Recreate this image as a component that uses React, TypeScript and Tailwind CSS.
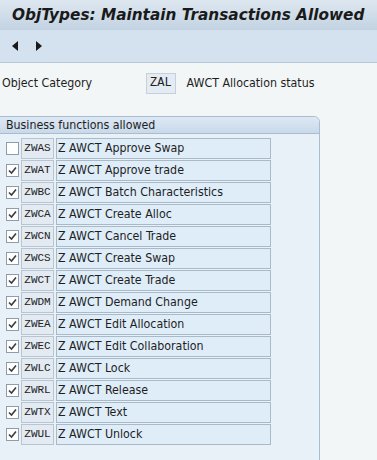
import React from 'react';

const rows: [boolean, string, string][] = [
  [false, 'ZWAS', 'Z AWCT Approve Swap'],
  [true, 'ZWAT', 'Z AWCT Approve trade'],
  [true, 'ZWBC', 'Z AWCT Batch Characteristics'],
  [true, 'ZWCA', 'Z AWCT Create Alloc'],
  [true, 'ZWCN', 'Z AWCT Cancel Trade'],
  [true, 'ZWCS', 'Z AWCT Create Swap'],
  [true, 'ZWCT', 'Z AWCT Create Trade'],
  [true, 'ZWDM', 'Z AWCT Demand Change'],
  [true, 'ZWEA', 'Z AWCT Edit Allocation'],
  [true, 'ZWEC', 'Z AWCT Edit Collaboration'],
  [true, 'ZWLC', 'Z AWCT Lock'],
  [true, 'ZWRL', 'Z AWCT Release'],
  [true, 'ZWTX', 'Z AWCT Text'],
  [true, 'ZWUL', 'Z AWCT Unlock'],
];

function Check({ on }: { on: boolean }) {
  return (
    <div className="w-[13px] h-[13px] border border-[#8e9cab] bg-white flex items-center justify-center shrink-0">
      {on && (
        <svg width="9" height="9" viewBox="0 0 9 9">
          <path d="M1 4.5 L3.5 7 L8 1.5" fill="none" stroke="#3c3c3c" strokeWidth="1.6" />
        </svg>
      )}
    </div>
  );
}

export default function App() {
  return (
    <div className="w-[377px] h-[460px] overflow-hidden bg-[#f2f6f6] font-['DejaVu_Sans_Condensed','Liberation_Sans',sans-serif] text-[#1e1e1e]">
      {/* Title */}
      <div className="h-[30px] bg-gradient-to-b from-[#dde7f0] to-[#c3d3e2] flex items-center pl-[12px]">
        <span className="font-['DejaVu_Sans',sans-serif] font-bold italic text-[15.3px] text-[#1a1a1a]">
          ObjTypes: Maintain Transactions Allowed
        </span>
      </div>
      {/* Toolbar */}
      <div className="h-[33px] bg-[#d4e2ef] border-b border-[#b5c7d9] flex items-center gap-[18px] pl-[12px]">
        <svg width="6" height="10" viewBox="0 0 6 10"><path d="M6 0 L0 5 L6 10 Z" fill="#1a1a1a" /></svg>
        <svg width="6" height="10" viewBox="0 0 6 10"><path d="M0 0 L6 5 L0 10 Z" fill="#1a1a1a" /></svg>
      </div>
      {/* Object category */}
      <div className="flex items-center h-[22px] mt-[9px] pl-[2px] text-[12.3px]">
        <span className="w-[144px]">Object Category</span>
        <span className="h-[21px] px-[3px] bg-[#e4ebf2] border border-[#c6d0da] flex items-center font-['Liberation_Mono',monospace] text-[12px] text-[#222]">ZAL</span>
        <span className="ml-[11px]">AWCT Allocation status</span>
      </div>
      {/* Group */}
      <div className="mt-[22px] -ml-[1px] w-[321px] h-[400px] bg-[#e8f0f8] border border-[#a9bcd0] rounded-tr-[6px] flex flex-col">
        <div className="h-[17px] bg-gradient-to-b from-[#dde8f4] to-[#c9d9ea] border-b border-[#a9bcd0] rounded-tr-[6px] flex items-center pl-[6px] text-[12.3px]">
          Business functions allowed
        </div>
        <div className="flex flex-col gap-[1px] pt-[4px] pl-[6px]">
          {rows.map(([on, code, text]) => (
            <div key={code} className="flex items-center h-[21px] gap-[2px]">
              <Check on={on} />
              <div className="w-[33px] h-[21px] bg-[#e3eaf1] border border-[#b8c4d0] flex items-center justify-center font-['Liberation_Mono',monospace] text-[11px] text-[#222]">
                {code}
              </div>
              <div className="w-[215px] h-[21px] bg-[#dfedf9] border border-[#a9b9c8] flex items-center pl-[1px] text-[12.3px]">
                {text}
              </div>
            </div>
          ))}
        </div>
      </div>
    </div>
  );
}
